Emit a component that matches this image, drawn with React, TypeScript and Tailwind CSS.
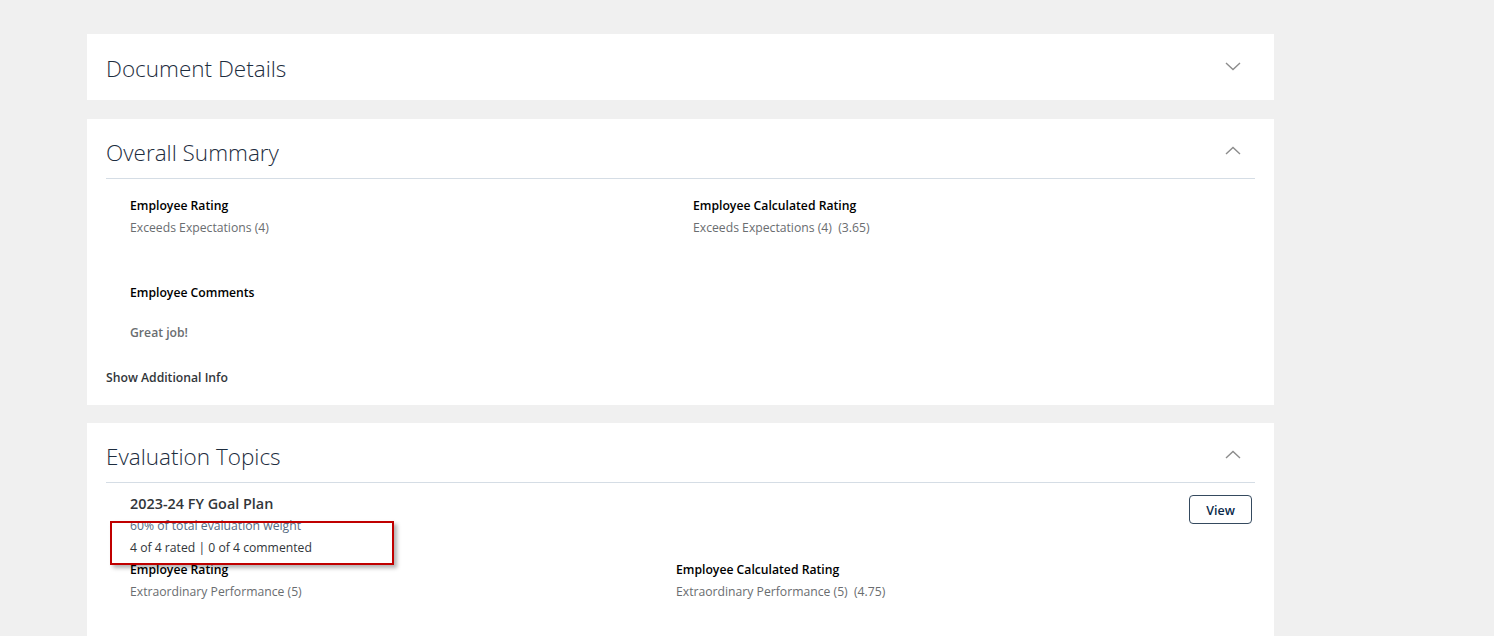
import React from 'react'

const font = { fontFamily: '"Open Sans", "Noto Sans", Arial, sans-serif' }

function Chevron({ up }: { up?: boolean }) {
  return (
    <svg width="16" height="9" viewBox="0 0 16 9" fill="none" className="text-[#8c8c8c]">
      {up ? (
        <path d="M1 8 L8 1.5 L15 8" stroke="currentColor" strokeWidth="1.4" />
      ) : (
        <path d="M1 1 L8 7.5 L15 1" stroke="currentColor" strokeWidth="1.4" />
      )}
    </svg>
  )
}

function Field({ label, value }: { label: string; value: string }) {
  return (
    <div className="flex flex-col">
      <span className="text-[12.2px] leading-[22px] font-semibold text-[#000]">{label}</span>
      <span className="text-[12.2px] leading-[22px] text-[#6a6d70] whitespace-pre">{value}</span>
    </div>
  )
}

function CardHeader({ title, up }: { title: string; up?: boolean }) {
  return (
    <div className="flex items-center justify-between h-[60px] border-b border-[#d5dde5] pt-[9px]">
      <h2 className="text-[22.5px] font-light text-[#1d2d3e] leading-none">{title}</h2>
      <div className="pr-[14px] pb-[6px]">
        <Chevron up={up} />
      </div>
    </div>
  )
}

export default function App() {
  return (
    <div className="min-h-[636px] bg-[#f0f0f0] pt-[34px] pl-[87px]" style={font}>
      <div className="w-[1187px] flex flex-col gap-[19px]">
        <section className="bg-white h-[66px] px-[19px] pt-[4px] flex items-center justify-between">
          <h2 className="text-[22.5px] font-light text-[#1d2d3e] leading-none">Document Details</h2>
          <div className="pr-[14px] pb-[6px]">
            <Chevron />
          </div>
        </section>

        <section className="bg-white px-[19px] pb-[16px]">
          <CardHeader title="Overall Summary" up />
          <div className="pl-[24px] pt-[16px] grid grid-cols-[563px_1fr]">
            <Field label="Employee Rating" value="Exceeds Expectations (4)" />
            <Field label="Employee Calculated Rating" value="Exceeds Expectations (4)  (3.65)" />
          </div>
          <div className="pl-[24px] pt-[43px] flex flex-col">
            <span className="text-[12.2px] leading-[22px] font-semibold text-[#000]">Employee Comments</span>
            <span className="text-[12.2px] leading-[22px] text-[#6a6d70] font-semibold mt-[18px]">Great job!</span>
          </div>
          <div className="mt-[23px] text-[12.2px] leading-[22px] font-semibold text-[#32363a]">Show Additional Info</div>
        </section>

        <section className="bg-white px-[19px] pb-[40px] -mt-[1px]">
          <CardHeader title="Evaluation Topics" up />
          <div className="pl-[24px] pt-[10px] flex justify-between">
            <div className="relative flex flex-col">
              <span className="text-[14.4px] leading-[22px] font-semibold text-[#32363a]">2023-24 FY Goal Plan</span>
              <span className="text-[12.2px] leading-[22px] text-[#556b82]">60% of total evaluation weight</span>
              <span className="text-[12.2px] leading-[22px] text-[#32363a]">4 of 4 rated | 0 of 4 commented</span>
              <div className="absolute left-[-20px] top-[28px] w-[284px] h-[44px] border-2 border-[#c00000] shadow-[3px_3px_4px_rgba(0,0,0,0.3)]" />
            </div>
            <button className="mt-[2px] mr-[3px] h-[29px] w-[63px] border border-[#354a5f] rounded-[4px] text-[12.5px] font-semibold text-[#0a2a4a] bg-white pt-[4px]">
              View
            </button>
          </div>
          <div className="pl-[24px] grid grid-cols-[546px_1fr]">
            <Field label="Employee Rating" value="Extraordinary Performance (5)" />
            <Field label="Employee Calculated Rating" value="Extraordinary Performance (5)  (4.75)" />
          </div>
        </section>
      </div>
    </div>
  )
}
